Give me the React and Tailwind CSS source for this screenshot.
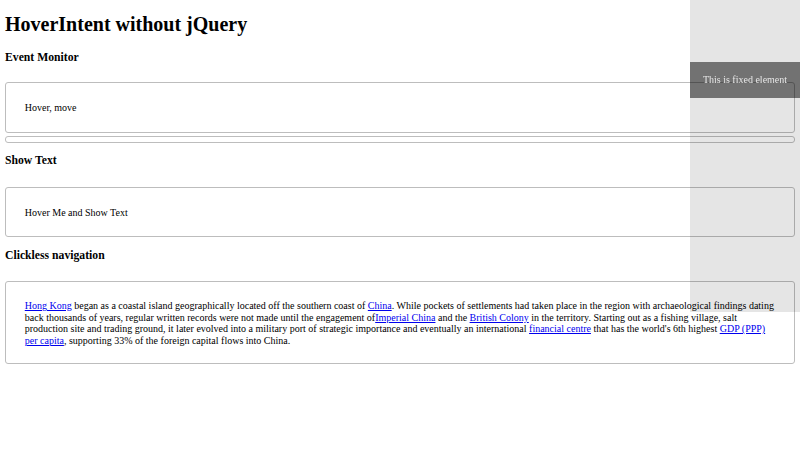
import React from "react";

export default function App() {
  return (
    <div className="min-h-[450px] bg-white px-[5px] pb-[5px] pt-[0.1px] font-['Liberation_Serif',serif] text-[10px] text-black leading-[11.5px]">
      <h1 className="mt-[13.4px] mb-[13.4px] text-[20px] font-bold leading-[23px]">
        HoverIntent without jQuery
      </h1>

      {/* Event Monitor */}
      <h3 className="mt-[14.4px] mb-[11.7px] text-[11.7px] font-bold leading-[13.5px]">
        Event Monitor
      </h3>
      <div className="mt-[18px] rounded-[3px] border border-[#bdbdbd] p-[18.75px] pb-[18px]">
        Hover, move
      </div>
      <div className="mt-[3px] h-[7px] rounded-[3px] border border-[#bdbdbd]"></div>

      {/* Show Text */}
      <h3 className="mt-[11.7px] mb-[11.7px] text-[11.7px] font-bold leading-[13.5px]">
        Show Text
      </h3>
      <div className="mt-[19px] rounded-[3px] border border-[#bdbdbd] p-[18.75px] pb-[18px]">
        Hover Me and Show Text
      </div>

      {/* Clickless navigation */}
      <h3 className="mt-[11.7px] mb-[11.7px] text-[11.7px] font-bold leading-[13.5px]">
        Clickless navigation
      </h3>
      <div className="mt-[19px] rounded-[3px] border border-[#bdbdbd] p-[18.75px] pt-[18px] pb-[17px]">
        <a href="#" className="text-[#0000ee] underline">Hong Kong</a> began as a coastal island geographically located off the southern coast of{" "}
        <a href="#" className="text-[#0000ee] underline">China</a>. While pockets of settlements had taken place in the region with archaeological findings dating back thousands of years, regular written records were not made until the engagement of
        <a href="#" className="text-[#0000ee] underline">Imperial China</a> and the{" "}
        <a href="#" className="text-[#0000ee] underline">British Colony</a> in the territory. Starting out as a fishing village, salt production site and trading ground, it later evolved into a military port of strategic importance and eventually an international{" "}
        <a href="#" className="text-[#0000ee] underline">financial centre</a> that has the world's 6th highest{" "}
        <a href="#" className="text-[#0000ee] underline">GDP (PPP) per capita</a>, supporting 33% of the foreign capital flows into China.
      </div>

      {/* fixed element */}
      <div className="fixed top-0 right-0 h-[312px] w-[110px] bg-black/10">
        <div className="mt-[62px] flex h-[36px] items-center justify-center bg-black/50 text-[10px] text-[#e6e6e6]">
          This is fixed element
        </div>
      </div>
    </div>
  );
}
